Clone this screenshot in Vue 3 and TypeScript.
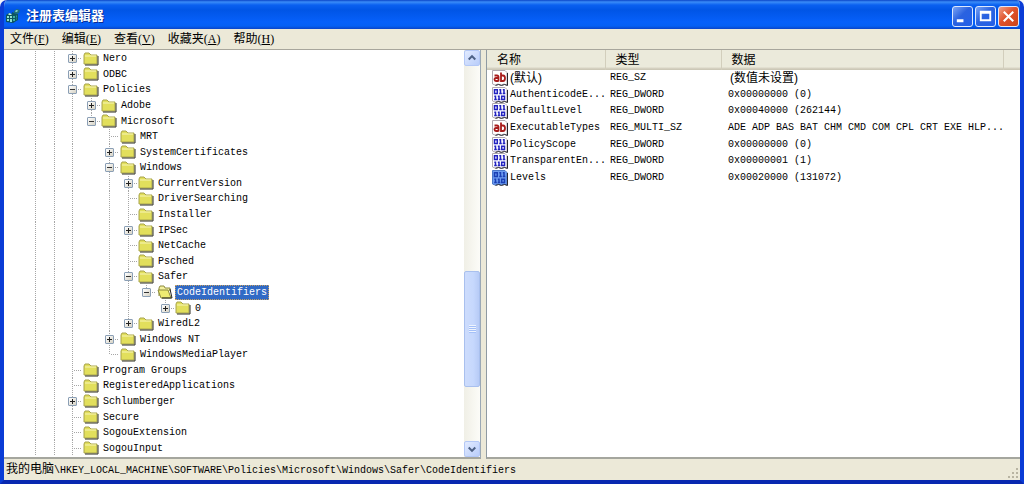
<script setup lang="ts">
import { computed, ref } from 'vue'

interface TreeRow {
  name: string
  depth: number
  toggle?: 'plus' | 'minus'
  open?: boolean
}

interface RegistryValue {
  name: string
  kind: 'text' | 'binary'
  type: string
  data: string
  cjk?: boolean
  marked?: boolean
}

const menus = [
  { label: '文件', key: 'F' },
  { label: '编辑', key: 'E' },
  { label: '查看', key: 'V' },
  { label: '收藏夹', key: 'A' },
  { label: '帮助', key: 'H' },
]

const rows: TreeRow[] = [
  { name: 'Nero', depth: 2, toggle: 'plus' },
  { name: 'ODBC', depth: 2, toggle: 'plus' },
  { name: 'Policies', depth: 2, toggle: 'minus' },
  { name: 'Adobe', depth: 3, toggle: 'plus' },
  { name: 'Microsoft', depth: 3, toggle: 'minus' },
  { name: 'MRT', depth: 4 },
  { name: 'SystemCertificates', depth: 4, toggle: 'plus' },
  { name: 'Windows', depth: 4, toggle: 'minus' },
  { name: 'CurrentVersion', depth: 5, toggle: 'plus' },
  { name: 'DriverSearching', depth: 5 },
  { name: 'Installer', depth: 5 },
  { name: 'IPSec', depth: 5, toggle: 'plus' },
  { name: 'NetCache', depth: 5 },
  { name: 'Psched', depth: 5 },
  { name: 'Safer', depth: 5, toggle: 'minus' },
  { name: 'CodeIdentifiers', depth: 6, toggle: 'minus', open: true },
  { name: '0', depth: 7, toggle: 'plus' },
  { name: 'WiredL2', depth: 5, toggle: 'plus' },
  { name: 'Windows NT', depth: 4, toggle: 'plus' },
  { name: 'WindowsMediaPlayer', depth: 4 },
  { name: 'Program Groups', depth: 2 },
  { name: 'RegisteredApplications', depth: 2 },
  { name: 'Schlumberger', depth: 2, toggle: 'plus' },
  { name: 'Secure', depth: 2 },
  { name: 'SogouExtension', depth: 2 },
  { name: 'SogouInput', depth: 2 },
]

const selected = ref('CodeIdentifiers')

// A guide line continues below a row while a later sibling exists at that level.
function continues(index: number, level: number): boolean {
  for (const row of rows.slice(index + 1)) {
    if (row.depth < level) return false
    if (row.depth === level) return true
  }
  return level <= 2
}

const tree = computed(() =>
  rows.map((row, index) => ({
    ...row,
    cells: Array.from({ length: row.depth + 1 }, (_, level) => ({
      own: level === row.depth,
      below: level < 2 || continues(index, level),
    })),
  })),
)

const values: RegistryValue[] = [
  { name: '(默认)', kind: 'text', type: 'REG_SZ', data: '(数值未设置)', cjk: true },
  { name: 'AuthenticodeE...', kind: 'binary', type: 'REG_DWORD', data: '0x00000000 (0)' },
  { name: 'DefaultLevel', kind: 'binary', type: 'REG_DWORD', data: '0x00040000 (262144)' },
  { name: 'ExecutableTypes', kind: 'text', type: 'REG_MULTI_SZ', data: 'ADE ADP BAS BAT CHM CMD COM CPL CRT EXE HLP...' },
  { name: 'PolicyScope', kind: 'binary', type: 'REG_DWORD', data: '0x00000000 (0)' },
  { name: 'TransparentEn...', kind: 'binary', type: 'REG_DWORD', data: '0x00000001 (1)' },
  { name: 'Levels', kind: 'binary', type: 'REG_DWORD', data: '0x00020000 (131072)', marked: true },
]
</script>

<template>
  <div class="window">
    <header class="titlebar">
      <svg class="app-icon" viewBox="0 0 16 16" aria-hidden="true">
        <path d="M1 7 4 5 7 6 7 4 9 5 13 6 13 12 8 15 1 14Z" fill="#0c5560" />
        <path d="M2 8h2v2H2zM5 8h2v2H5zM2 11h2v2H2zM5 11h2v3H5z" fill="#8fe0d0" />
        <path d="M8 8h2v2H8zM8 11h2v2H8z" fill="#3fb0a4" />
        <path d="M3 6 5 5 7 7H4z" fill="#b8f0e4" />
        <path d="M9 3 12 1 15 2 14 5 11 6 9 5z" fill="#1f7078" />
        <path d="M10 3 12 2 13 3 11 4z" fill="#a0e8dc" />
        <path d="M11 8l1-1v2l-1 1zM11 11l1-1v1l-1 1z" fill="#2b9a94" />
      </svg>
      <h1>注册表编辑器</h1>
      <div class="window-buttons">
        <button type="button" aria-label="最小化">
          <svg viewBox="0 0 20 20"><path d="M4 13h7v3H4z" fill="#fff" /></svg>
        </button>
        <button type="button" aria-label="最大化">
          <svg viewBox="0 0 20 20"><path d="M4 4h12v11H4zM6 7v6h8V7z" fill="#fff" fill-rule="evenodd" /></svg>
        </button>
        <button type="button" class="close" aria-label="关闭">
          <svg viewBox="0 0 20 20"><path d="M5 5l10 10M15 5l-10 10" stroke="#fff" stroke-width="2.2" /></svg>
        </button>
      </div>
    </header>

    <nav class="menubar">
      <button v-for="menu in menus" :key="menu.key" type="button">
        {{ menu.label }}<span class="key">(<u>{{ menu.key }}</u>)</span>
      </button>
    </nav>

    <main class="panes">
      <section class="tree-pane">
        <ul class="tree" role="tree">
          <li v-for="row in tree" :key="row.name" class="row" role="treeitem" :aria-selected="row.name === selected">
            <span
              v-for="(cell, level) in row.cells"
              :key="level"
              class="cell"
              :class="{ line: cell.below, half: cell.own && !cell.below, branch: cell.own }"
            >
              <button v-if="cell.own && row.toggle" type="button" class="toggle" :class="row.toggle" :aria-label="row.name"></button>
            </span>
            <svg v-if="row.open" class="folder" viewBox="0 0 16 14" aria-hidden="true">
              <path d="M2 11V3l1-2h4l1 2h5v3" fill="#f4f1a0" stroke="#8c8a3c" />
              <path d="M1 5h10l3 8H4z" fill="#eeeb72" stroke="#8c8a3c" />
              <path d="M13 4l2 9H5" fill="none" stroke="#222" />
            </svg>
            <svg v-else class="folder" viewBox="0 0 16 14" aria-hidden="true">
              <path d="M1 12V3l1-2h4l2 2h6v9z" fill="#e2df5c" stroke="#a8a44c" />
              <path d="M2 4h11" stroke="#f8f6b8" />
              <path d="M2 13h13V4" fill="none" stroke="#2c2c20" />
            </svg>
            <span class="label mono" :class="{ selected: row.name === selected }" @click="selected = row.name">{{ row.name }}</span>
          </li>
        </ul>
        <div class="scrollbar">
          <button type="button" aria-label="向上滚动">
            <svg viewBox="0 0 15 15"><path d="M4 9l3.5-3.5L11 9" fill="none" stroke="#4d6185" stroke-width="2.2" /></svg>
          </button>
          <div class="track">
            <div class="thumb"><i></i></div>
          </div>
          <button type="button" aria-label="向下滚动">
            <svg viewBox="0 0 15 15"><path d="M4 6l3.5 3.5L11 6" fill="none" stroke="#4d6185" stroke-width="2.2" /></svg>
          </button>
        </div>
      </section>

      <section class="value-pane">
        <table>
          <colgroup>
            <col class="col-name" />
            <col class="col-type" />
            <col />
            <col class="col-rest" />
          </colgroup>
          <thead>
            <tr>
              <th>名称</th>
              <th>类型</th>
              <th>数据</th>
              <td></td>
            </tr>
          </thead>
          <tbody>
            <tr v-for="value in values" :key="value.name" :class="{ cjk: value.cjk }">
              <td class="name">
                <div>
                  <svg class="value-icon" viewBox="0 0 16 16" aria-hidden="true">
                    <path d="M0.5 0.500H13l2 2V15l-3-1-3 1-3-1-3 1-2.500-1z" :fill="value.marked ? '#6d9cf0' : '#fff'" :stroke="value.marked ? '#4a78c8' : '#b0a8b0'" />
                    <path d="M15.500 3v12.500l-3-1-3 1-3-1-3 1" fill="none" stroke="#26262e" />
                    <g v-if="value.kind === 'text'" fill="none" stroke="#a81c1c" stroke-width="1.800">
                      <path d="M2.500 5.500H5q1.500 0 1.500 1.500v4.500M6.500 8H4Q2.500 8 2.500 9.500T4 11h2.500" />
                      <path d="M9 2.500V11h2q2 0 2-2.700T11 5.500H9" />
                    </g>
                    <g v-else fill="none" :stroke="value.marked ? '#1a3fb4' : '#2222c0'" stroke-width="1.500">
                      <path d="M2.500 2.800h2.800v3.600H2.500zM8.500 2v5M12 2v5M7.300 2.800h1M10.800 2.800h1M7.200 6.500h2.600M10.700 6.500h2.600" />
                      <path d="M3.500 8.500v4.500M7 8.500v4.500M2.300 9.300h1M5.800 9.300h1M2.200 12.500h2.600M5.700 12.500h2.600M9.700 9.200h2.800v3.400H9.700z" />
                    </g>
                  </svg>
                  <span>{{ value.name }}</span>
                </div>
              </td>
              <td>{{ value.type }}</td>
              <td>{{ value.data }}</td>
              <td></td>
            </tr>
          </tbody>
        </table>
      </section>
    </main>

    <footer class="statusbar">
      <span>我的电脑<span class="mono">\HKEY_LOCAL_MACHINE\SOFTWARE\Policies\Microsoft\Windows\Safer\CodeIdentifiers</span></span>
      <svg class="grip" viewBox="0 0 12 12" aria-hidden="true">
        <path d="M8 0h2v2H8zM4 4h2v2H4zM8 4h2v2H8zM0 8h2v2H0zM4 8h2v2H4zM8 8h2v2H8z" fill="#b8b4a2" />
      </svg>
    </footer>
  </div>
</template>

<style>
body {
  margin: 0;
  background: #f4f6fb;
}
</style>

<style scoped>
.window {
  display: flex;
  flex-direction: column;
  box-sizing: border-box;
  height: 100vh;
  border: solid #0a3cd6;
  border-width: 0 4px 4px;
  border-bottom-color: #0828b0;
  border-radius: 7px 7px 0 0;
  overflow: hidden;
  background: #ece9d8;
  color: #000;
  font: 12px/16px "Liberation Sans", "Noto Sans CJK SC", sans-serif;
}

button {
  margin: 0;
  padding: 0;
  border: 0;
  background: none;
  color: inherit;
  font: inherit;
}

.mono {
  font-family: "Liberation Mono", "Noto Sans CJK SC", monospace;
  font-size: 10px;
}

.key {
  font-family: "Liberation Serif", serif;
}

.titlebar {
  display: flex;
  align-items: center;
  flex: none;
  height: 29px;
  margin: 0 -4px;
  padding: 3px 5px 0;
  box-sizing: border-box;
  background: linear-gradient(#0a45c8 0, #3a8cf8 2px, #0a60f0 5px, #0055e6 10px, #0660fa 22px, #0560f4 26px, #0a44c8 29px);
}

.app-icon {
  width: 16px;
  height: 16px;
}

h1 {
  flex: 1;
  margin: 0 0 0 5px;
  color: #fff;
  font-size: 13px;
  font-weight: bold;
  text-shadow: 1px 1px #0a2c90;
}

.window-buttons {
  display: flex;
  gap: 2px;
}

.window-buttons button {
  width: 21px;
  height: 21px;
  box-sizing: border-box;
  border: 1px solid #dce8ff;
  border-radius: 3px;
  background: linear-gradient(135deg, #7ba4f4, #2a62e0 45%, #2460e8);
}

.window-buttons .close {
  background: linear-gradient(135deg, #f0a088, #e0532c 45%, #cc4418);
}

.window-buttons svg {
  display: block;
  width: 19px;
  height: 19px;
}

.menubar {
  display: flex;
  align-items: center;
  flex: none;
  gap: 13px;
  height: 20px;
  padding-left: 6px;
  border-bottom: 1px solid #a8a69c;
}

.panes {
  display: grid;
  grid-template-columns: 477px 1fr;
  gap: 5px;
  flex: 1;
  min-height: 0;
}

.tree-pane {
  display: flex;
  min-height: 0;
  border-right: 1px solid #9ba8b4;
  border-bottom: 2px solid #a5a69e;
  background: #fff;
}

.tree {
  display: grid;
  grid-auto-rows: 1fr;
  flex: 1;
  margin: 0;
  padding: 1px 0 1px 22px;
  list-style: none;
}

.row {
  display: flex;
  align-items: center;
  min-height: 0;
}

.cell {
  display: flex;
  align-items: center;
  align-self: stretch;
  flex: none;
  width: 18px;
  box-sizing: border-box;
  padding-left: 5px;
  background-position: 9px 0, 9px 50%;
  background-repeat: no-repeat;
}

.cell:nth-child(odd) {
  width: 19px;
}

.cell.line {
  background-image: repeating-linear-gradient(#a6a6a6 0 1px, #fff 1px 2px);
  background-size: 1px 100%;
}

.cell.branch {
  background-image: repeating-linear-gradient(#a6a6a6 0 1px, #fff 1px 2px), repeating-linear-gradient(90deg, #a6a6a6 0 1px, #fff 1px 2px);
  background-size: 1px 100%, 10px 1px;
}

.cell.half {
  background-size: 1px 50%, 10px 1px;
}

.toggle {
  width: 9px;
  height: 9px;
  box-sizing: border-box;
  border: 1px solid #8b9fb5;
  border-radius: 1px;
  background:
    linear-gradient(#333, #333) center / 5px 1px no-repeat,
    linear-gradient(135deg, #fff, #d6d2c4);
}

.toggle.plus {
  background:
    linear-gradient(#222, #222) center / 5px 1px no-repeat,
    linear-gradient(#222, #222) center / 1px 5px no-repeat,
    linear-gradient(135deg, #fff, #d6d2c4);
}

.folder {
  flex: none;
  width: 16px;
  height: 14px;
  margin: 0 2px 0 1px;
}

.label {
  padding: 0 2px;
  line-height: 15px;
  white-space: nowrap;
}

.label.selected {
  outline: 1px dotted #c8a060;
  outline-offset: -1px;
  background: #316ac5;
  color: #fff;
}

.scrollbar {
  display: flex;
  flex-direction: column;
  width: 16px;
  background: linear-gradient(90deg, #f0efe6, #fcfcf8);
}

.scrollbar button {
  height: 16px;
  box-sizing: border-box;
  border: 1px solid #b4c8f6;
  border-radius: 2px;
  background: linear-gradient(135deg, #e2ebff, #b9cdfa);
}

.scrollbar svg {
  display: block;
  width: 14px;
  height: 14px;
}

.track {
  display: grid;
  grid-template-rows: 204fr 116fr 54fr;
  flex: 1;
}

.thumb {
  display: grid;
  grid-row: 2;
  place-items: center;
  border: 1px solid #a9c0ee;
  border-radius: 2px;
  background: linear-gradient(90deg, #cddcfc, #c6d8fd 60%, #b7cbf6);
}

.thumb i {
  width: 7px;
  height: 8px;
  background: repeating-linear-gradient(#eef4fe 0 1px, #a4c0f8 1px 2px);
}

.value-pane {
  min-width: 0;
  border-left: 1px solid #8f9aa2;
  border-bottom: 2px solid #a5a69e;
  background: #fff;
}

table {
  width: 100%;
  height: 136px;
  border-collapse: collapse;
  table-layout: fixed;
}

.col-name {
  width: 118px;
}

.col-type {
  width: 116px;
}

.col-rest {
  width: 17px;
}

thead tr {
  height: 20px;
  background: linear-gradient(#ebeadb 0 17px, #d8d4c4 18px, #c8c4b2 20px);
}

th {
  padding: 0 0 0 10px;
  border-right: 1px solid #d2cebc;
  font-weight: normal;
  text-align: left;
}

tbody td {
  padding: 0 0 0 5px;
  font-family: "Liberation Mono", "Noto Sans CJK SC", monospace;
  font-size: 10px;
  line-height: 16px;
  white-space: nowrap;
}

tbody td:nth-child(3) {
  padding-left: 7px;
}

tbody .cjk td:first-child,
tbody .cjk td:nth-child(3) {
  font-family: "Liberation Sans", "Noto Sans CJK SC", sans-serif;
  font-size: 12px;
}

tbody .cjk td:nth-child(3) {
  padding-left: 9px;
}

.name div {
  display: flex;
  align-items: center;
  gap: 2px;
}

.value-icon {
  flex: none;
  width: 16px;
  height: 16px;
}

.statusbar {
  display: flex;
  align-items: center;
  justify-content: space-between;
  flex: none;
  height: 21px;
  padding-left: 2px;
}

.grip {
  align-self: flex-end;
  width: 12px;
  height: 12px;
}
</style>
